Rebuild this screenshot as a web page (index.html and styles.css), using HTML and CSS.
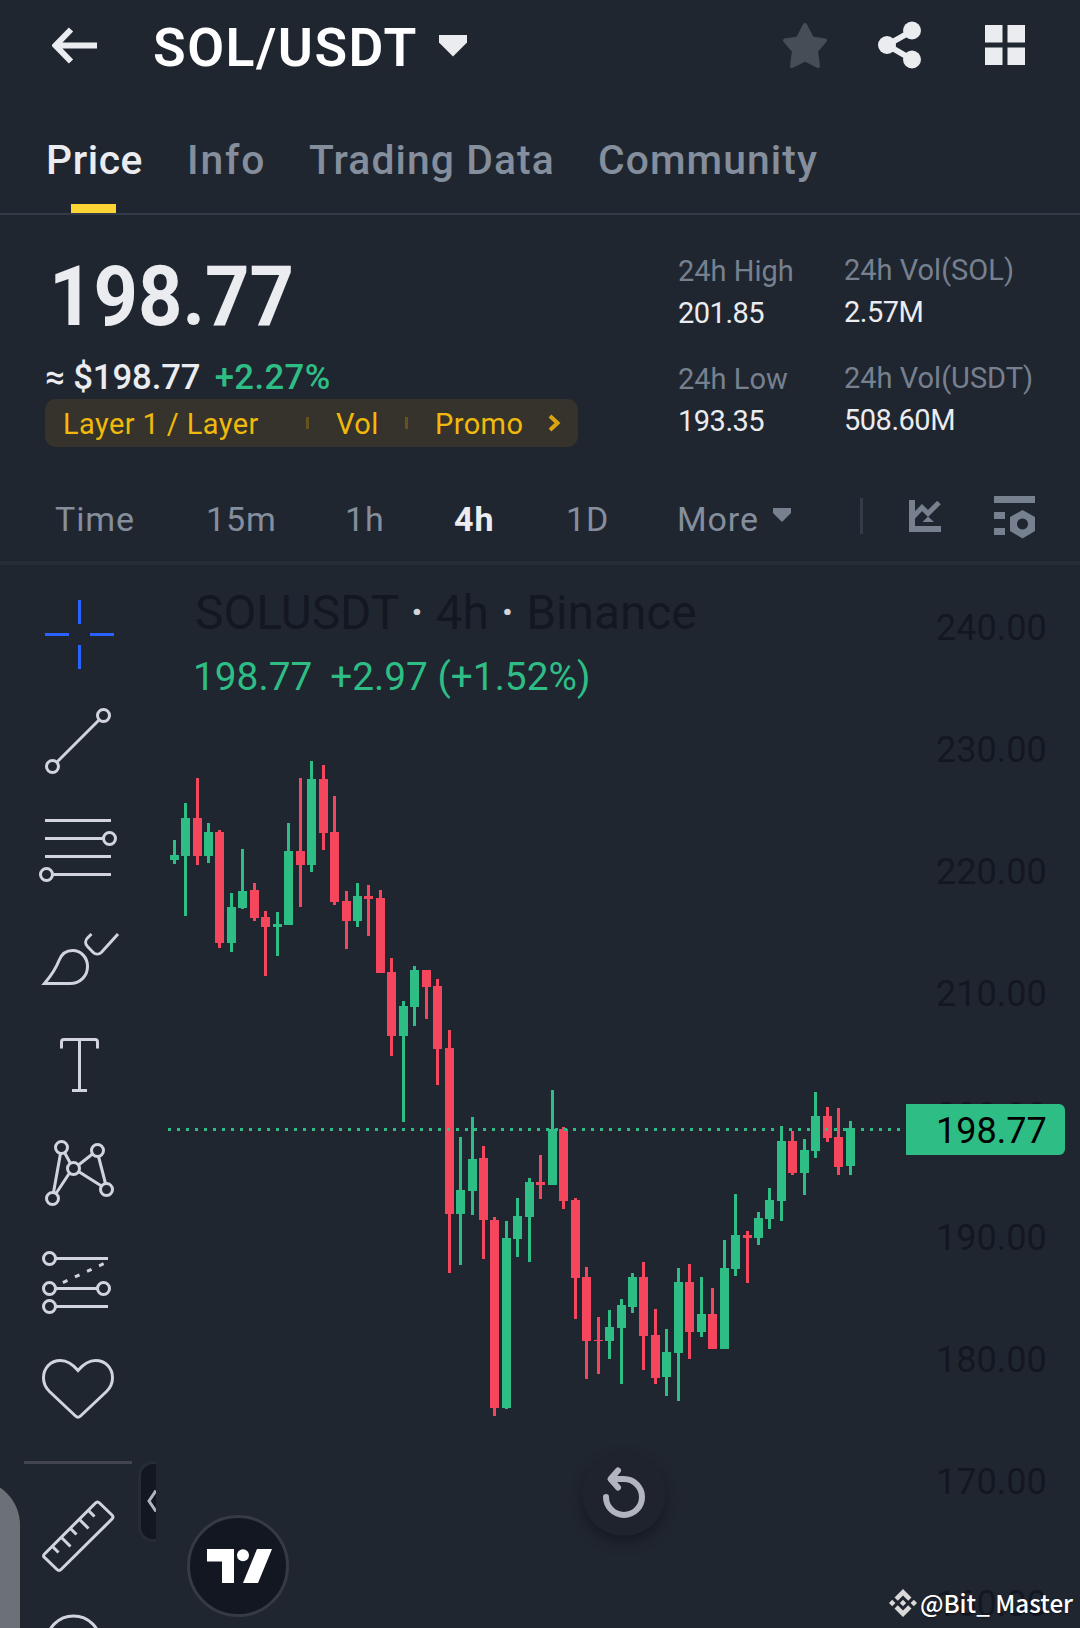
FILE: index.html
```html
<!DOCTYPE html>
<html lang="en">
  <head>
    <meta charset="UTF-8" />
    <meta name="viewport" content="width=device-width, initial-scale=1.0" />
    <title>SOL/USDT</title>
    <link rel="stylesheet" href="styles.css">
  </head>
  <body>
    <header class="header">
      <svg class="back" width="46" height="38" viewBox="0 0 46 38">
        <path d="M19 2.500 L3.500 18.500 L19 34.500 M4 18.500 H45" />
      </svg>
      <h1 class="pair">SOL/USDT</h1>
      <svg class="pair-caret" width="28" height="22" viewBox="0 0 28 22">
        <path d="M0 0H28V7.500L14 21.500L0 7.500Z" />
      </svg>
      <div class="header-actions">
        <svg class="star" width="46" height="48" viewBox="0 0 46 48">
          <path d="M23 3 L30 16.500 L43 18.500 L34 29 L36 44 L23 37.500 L10 44 L12 29 L3 18.500 L16 16.500Z" />
        </svg>
        <svg class="share" width="44" height="48" viewBox="0 0 44 48">
          <path d="M9 24 L34 10 M9 24 L34 38.500" />
          <circle cx="9" cy="24" r="9" />
          <circle cx="34" cy="9.500" r="9" />
          <circle cx="34" cy="38.500" r="9" />
        </svg>
        <svg class="apps" width="40" height="40" viewBox="0 0 40 40">
          <path d="M0 0H17.500V17.500H0Z M22.500 0H40V17.500H22.500Z M0 22.500H17.500V40H0Z M22.500 22.500H40V40H22.500Z" />
        </svg>
      </div>
    </header>

    <nav class="tabs">
      <div class="tab active">Price</div>
      <div class="tab tab-info">Info</div>
      <div class="tab">Trading Data</div>
      <div class="tab">Community</div>
    </nav>

    <section class="quote">
      <div class="quote-main">
        <div class="price">198.77</div>
        <div class="price-sub"><span class="fiat">≈ $198.77</span> <span class="change">+2.27%</span></div>
        <div class="tags">
          <span class="tag-layer">Layer 1 / Layer</span>
          <i class="tag-sep"></i>
          <span class="tag-vol">Vol</span>
          <i class="tag-sep"></i>
          <span class="tag-promo">Promo</span>
          <svg class="tag-arrow" width="13" height="18" viewBox="0 0 13 18">
            <path d="M2 2 L9.500 9 L2 16" />
          </svg>
        </div>
      </div>
      <div class="stats">
        <div class="stat">
          <div class="stat-label">24h High</div>
          <div class="stat-value">201.85</div>
        </div>
        <div class="stat">
          <div class="stat-label">24h Vol(SOL)</div>
          <div class="stat-value">2.57M</div>
        </div>
        <div class="stat">
          <div class="stat-label">24h Low</div>
          <div class="stat-value">193.35</div>
        </div>
        <div class="stat">
          <div class="stat-label">24h Vol(USDT)</div>
          <div class="stat-value">508.60M</div>
        </div>
      </div>
    </section>

    <div class="intervals">
      <span>Time</span>
      <span>15m</span>
      <span>1h</span>
      <span class="active">4h</span>
      <span>1D</span>
      <span>More</span>
      <svg class="more-caret" width="18" height="14" viewBox="0 0 18 14">
        <path d="M0 0H18V5L9 14L0 5Z" />
      </svg>
      <i class="intervals-sep"></i>
      <svg class="chart-icon" width="32" height="32" viewBox="0 0 32 32">
        <path class="fill" d="M0 0H6V26H32V32H0Z M13.500 22 L19 16.500 L25 22Z" />
        <path class="line" d="M4 17 L13 7.500 L19 13.500 L30 2.500" />
      </svg>
      <svg class="settings-icon" width="41" height="43" viewBox="0 0 41 43">
        <path fill-rule="evenodd" d="M0 0H41V7H0Z M0 16H11V23H0Z M0 32H11V39H0Z M28.500 14 L41 21 V35 L28.500 42.500 L16 35 V21Z M28.500 22.500a5.500 5.500 0 1 0 .01 0Z" />
      </svg>
    </div>

    <main class="chart">
      <aside class="toolbar">
        <svg class="tool selected" viewBox="0 0 84 84">
          <path d="M43.500 8V32 M43.500 53V77 M9 42.500H33 M54 42.500H78" />
        </svg>
        <svg class="tool" viewBox="0 0 84 84">
          <path d="M20.500 62.500 L63.500 19.500" />
          <circle cx="67.500" cy="15.500" r="6" />
          <circle cx="16.500" cy="66.500" r="6" />
        </svg>
        <svg class="tool" viewBox="0 0 84 84">
          <path d="M9 12.500H75 M9 30.500H67 M9 48.500H75 M17 66.500H75" />
          <circle cx="73.500" cy="30.500" r="6" />
          <circle cx="10.500" cy="66.500" r="6" />
        </svg>
        <svg class="tool" viewBox="0 0 84 84">
          <path d="M8.500 67.500H34C44 67.500 51.500 60 51.500 50.500C51.500 41.500 45 34.500 36.500 34.500C30 34.500 25.500 38 23 44.500C20 52.500 16 58.500 8.500 67.500Z" />
          <path d="M55.500 18L51.500 22C49 24.500 49 28 51.500 30.500L57 36.200C59.500 38.700 63 38.700 65.500 36.200L82 18" />
        </svg>
        <svg class="tool" viewBox="0 0 84 84">
          <path d="M25.500 24.500V18Q25.500 15.500 28 15.500H59Q61.500 15.500 61.500 18V24.500 M43.500 15.500V66.500 M36 66.500H51" />
        </svg>
        <svg class="tool" viewBox="0 0 84 84">
          <path d="M24.500 21.500L17.500 60.500 M20 61.500L33.500 41 M28.500 20.500L34.500 31.500 M42.500 33L56.500 22 M62.500 24.500L69.500 51.500 M42.500 39.500L65.500 54" />
          <circle cx="25.500" cy="15.500" r="6" />
          <circle cx="61.500" cy="18.500" r="6" />
          <circle cx="37.500" cy="36.500" r="6" />
          <circle cx="70.500" cy="57.500" r="6" />
          <circle cx="16.500" cy="66.500" r="6" />
        </svg>
        <svg class="tool" viewBox="0 0 84 84">
          <path d="M19.500 18.500H72 M19.500 48.500H61.500 M19.500 66.500H72" />
          <path class="dashes" d="M26 43L68 23.500" />
          <circle cx="13.500" cy="18.500" r="6" />
          <circle cx="13.500" cy="48.500" r="6" />
          <circle cx="67.500" cy="48.500" r="6" />
          <circle cx="13.500" cy="66.500" r="6" />
        </svg>
        <svg class="tool" viewBox="0 0 84 84">
          <path d="M42 22.500C36.500 16 31 12.500 24.500 12.500C14.500 12.500 7.500 20 7.500 30C7.500 36 9.500 39.500 13.500 43.500L39.500 68Q42 70.500 44.500 68L70.500 43.500C74.500 39.500 76.500 36 76.500 30C76.500 20 69.500 12.500 59.500 12.500C53 12.500 47.500 16 42 22.500Z" />
        </svg>
        <i class="toolbar-sep"></i>
        <svg class="tool" viewBox="0 0 84 84">
          <path d="M8.500 60L59.500 9Q61.500 7 63.500 9L76 21Q78 23 76 25L25 75.500Q23 77.500 21 75.500L8.500 63.500Q6.500 62 8.500 60Z" />
          <path d="M16.500 52.500L22.500 58.500 M25.500 43.500L34.500 52.500 M34.500 34.500L40.500 40.500 M43.500 25.500L52.500 34.500 M52.500 16.500L58.500 22.500" />
        </svg>
        <svg class="tool" viewBox="0 0 84 84">
          <circle cx="37.500" cy="41" r="27" />
        </svg>
      </aside>

      <div class="plot">
        <div class="legend">
          <div class="legend-title">SOLUSDT <b>·</b> 4h <b>·</b> Binance</div>
          <div class="legend-values"><span>198.77</span><span>+2.97 (+1.52%)</span></div>
        </div>
        <svg class="candles" id="candles" width="750" height="1063" viewBox="156 565 750 1063" shape-rendering="crispEdges"></svg>
        <div class="collapse">
          <svg width="10" height="24" viewBox="0 0 10 24"><path d="M9 1.500L2 12L9 22.500" /></svg>
        </div>
        <div class="tv-logo">
          <svg width="65" height="34" viewBox="0 0 65 34">
            <path d="M0 0H27V34H15V12.500H0Z M50 0H65L51 34H36Z" />
            <circle cx="36" cy="6.300" r="6" />
          </svg>
        </div>
        <div class="reset">
          <svg width="48" height="60" viewBox="0 0 48 60">
            <path d="M6 33A18 18 0 1 0 24 15H12 M18 6.500L10.500 15L18 23.500" />
          </svg>
        </div>
      </div>

      <div class="axis">
        <span>240.00</span>
        <span>230.00</span>
        <span>220.00</span>
        <span>210.00</span>
        <span>200.00</span>
        <span>190.00</span>
        <span>180.00</span>
        <span>170.00</span>
        <span>160.00</span>
        <div class="last-price">198.77</div>
      </div>
    </main>

    <div class="side-handle"></div>

    <div class="author">
      <svg width="28" height="28" viewBox="0 0 28 28">
        <path d="M14 0L22.500 8.500L19.200 11.800L14 6.600L8.800 11.800L5.500 8.500Z M14 28L22.500 19.500L19.200 16.200L14 21.400L8.800 16.200L5.500 19.500Z M14 10.800L17.200 14L14 17.200L10.800 14Z M3.200 10.800L6.400 14L3.200 17.200L0 14Z M24.800 10.800L28 14L24.800 17.200L21.600 14Z" />
      </svg>
      <span>@Bit_ Master</span>
    </div>

    <script>
      // x, high, body top, body bottom, low, direction (1 = up)
      const candles = [
        [170, 840, 855, 860, 864, 1],
        [181, 803, 818, 856, 916, 1],
        [193, 778, 818, 856, 865, 0],
        [204, 823, 832, 856, 863, 1],
        [215, 830, 832, 943, 948, 0],
        [227, 893, 907, 943, 952, 1],
        [238, 849, 891, 908, 909, 1],
        [250, 883, 890, 918, 921, 0],
        [261, 911, 917, 927, 976, 0],
        [273, 912, 924, 927, 956, 1],
        [284, 823, 851, 925, 925, 1],
        [296, 778, 851, 865, 907, 0],
        [307, 761, 779, 865, 872, 1],
        [319, 765, 779, 833, 850, 0],
        [330, 796, 832, 902, 905, 0],
        [342, 891, 901, 921, 949, 0],
        [353, 883, 896, 921, 927, 1],
        [364, 885, 896, 899, 936, 0],
        [376, 890, 898, 973, 973, 0],
        [387, 958, 972, 1036, 1056, 0],
        [399, 1001, 1006, 1036, 1122, 1],
        [410, 966, 970, 1007, 1026, 1],
        [422, 970, 970, 987, 1019, 0],
        [433, 979, 986, 1049, 1085, 0],
        [445, 1030, 1048, 1214, 1273, 0],
        [456, 1137, 1190, 1214, 1265, 1],
        [468, 1117, 1159, 1191, 1215, 1],
        [479, 1146, 1158, 1220, 1259, 0],
        [490, 1217, 1220, 1408, 1416, 0],
        [502, 1221, 1238, 1408, 1409, 1],
        [513, 1198, 1216, 1239, 1257, 1],
        [525, 1178, 1182, 1217, 1262, 1],
        [536, 1155, 1182, 1185, 1199, 0],
        [548, 1090, 1129, 1185, 1185, 1],
        [559, 1127, 1129, 1201, 1209, 0],
        [571, 1198, 1200, 1278, 1319, 0],
        [582, 1267, 1277, 1341, 1379, 0],
        [594, 1317, 1340, 1341, 1374, 0],
        [605, 1310, 1327, 1341, 1359, 1],
        [617, 1299, 1305, 1328, 1384, 1],
        [628, 1273, 1277, 1307, 1313, 1],
        [639, 1262, 1277, 1336, 1370, 0],
        [651, 1309, 1335, 1378, 1384, 0],
        [662, 1329, 1352, 1377, 1396, 1],
        [674, 1268, 1282, 1353, 1401, 1],
        [685, 1264, 1282, 1332, 1359, 0],
        [697, 1277, 1314, 1332, 1337, 1],
        [708, 1288, 1314, 1349, 1349, 0],
        [720, 1240, 1268, 1349, 1349, 1],
        [731, 1194, 1235, 1269, 1276, 1],
        [743, 1231, 1235, 1238, 1283, 0],
        [754, 1212, 1218, 1238, 1245, 1],
        [765, 1188, 1200, 1219, 1229, 1],
        [777, 1126, 1141, 1201, 1221, 1],
        [788, 1131, 1141, 1173, 1175, 0],
        [800, 1139, 1150, 1173, 1195, 1],
        [811, 1092, 1116, 1151, 1158, 1],
        [823, 1107, 1116, 1138, 1142, 0],
        [834, 1108, 1137, 1167, 1175, 0],
        [846, 1121, 1128, 1166, 1175, 1]
      ];

      const svg = document.getElementById("candles");
      let shapes = "";
      candles.forEach(([x, high, top, bottom, low, up]) => {
        const cls = up ? "up" : "down";
        shapes += `<rect class="${cls}" x="${x + 3}" y="${high}" width="3" height="${low - high}" />`;
        shapes += `<rect class="${cls}" x="${x}" y="${top}" width="9" height="${bottom - top}" />`;
      });

      // dotted line at the last price
      shapes += `<line class="last-line" x1="168" y1="1129.5" x2="900" y2="1129.5" />`;
      svg.innerHTML = shapes;
    </script>
  </body>
</html>
```
FILE: styles.css
```css
* {
  box-sizing: border-box;
}

body {
  margin: 0;
  width: 1080px;
  height: 1628px;
  position: relative;
  overflow: hidden;
  background-color: #202630;
  color: #eaecef;
  font-family: Roboto, "Liberation Sans", sans-serif;
}

svg {
  display: block;
  flex-shrink: 0;
}

/* Header */
.header {
  display: flex;
  align-items: center;
  height: 96px;
  padding: 0 55px 0 52px;
}

.back {
  margin-top: -5px;
  fill: none;
  stroke: #eaecef;
  stroke-width: 6;
}

.pair {
  width: 266px;
  margin: 0 0 0 55px;
  font-size: 53.5px;
  font-weight: 600;
  line-height: 60px;
  letter-spacing: 1.5px;
  white-space: nowrap;
  color: #fff;
}

.pair-caret {
  margin: -4px 0 0 20px;
  fill: #eaecef;
}

.header-actions {
  display: flex;
  align-items: center;
  margin-left: auto;
  margin-top: -6px;
  fill: #eaecef;
}

.star {
  margin-top: 2px;
  fill: #474d57;
  stroke: #474d57;
  stroke-width: 4;
  stroke-linejoin: round;
  margin-right: 50px;
}

.share {
  margin-right: 63px;
}

.share path {
  stroke: #eaecef;
  stroke-width: 6;
}

/* Tabs */
.tabs {
  display: grid;
  grid-template-columns: 141px 122px 289px auto;
  grid-template-rows: 117px;
  height: 119px;
  padding-left: 46px;
  border-bottom: 2px solid #333b47;
  font-size: 40.8px;
  font-weight: 500;
  letter-spacing: 1.1px;
  line-height: 128px;
  color: #848e9c;
}

.tab {
  position: relative;
  white-space: nowrap;
}

.tab.active {
  color: #eaecef;
  letter-spacing: 0.6px;
}

.tab-info {
  letter-spacing: 1.9px;
}

.tab.active::after {
  content: "";
  position: absolute;
  left: 25px;
  bottom: 0;
  width: 45px;
  height: 9px;
  background-color: #fcd535;
}

/* Quote */
.quote {
  display: flex;
  height: 260px;
  padding: 35px 0 0 45px;
}

.quote-main {
  width: 633px;
}

.price {
  margin: 7px 0 20px 4px;
  font-size: 83px;
  font-weight: 700;
  line-height: 80px;
  transform: scaleX(0.935);
  transform-origin: left;
}

.price-sub {
  height: 42px;
  font-size: 34.7px;
  font-weight: 500;
  line-height: 40px;
  white-space: nowrap;
}

.fiat {
  display: inline-block;
  width: 161px;
  letter-spacing: -0.1px;
}

.change {
  color: #2ebd85;
  letter-spacing: 0.4px;
}

.tags {
  display: flex;
  align-items: center;
  width: 533px;
  height: 48px;
  padding-left: 18px;
  border-radius: 11px;
  background-color: #35332c;
  color: #f0b90b;
  font-size: 29px;
  letter-spacing: 0.4px;
  white-space: nowrap;
}

.tags span {
  padding-top: 2px;
}

.tag-layer {
  width: 243px;
}

.tag-sep {
  width: 3px;
  height: 12px;
  background-color: #66521f;
}

.tag-vol {
  width: 69px;
  margin-left: 27px;
}

.tag-promo {
  width: 86px;
  margin-left: 27px;
}

.tag-arrow {
  margin-left: 27px;
  fill: none;
  stroke: #d9a50f;
  stroke-width: 4;
}

.stats {
  display: grid;
  grid-template-columns: 166px auto;
  grid-template-rows: 84px 84px;
  row-gap: 24px;
  font-size: 29px;
  line-height: 42px;
  white-space: nowrap;
}

.stat:nth-child(even) {
  margin-top: -1px;
}

.stat-label {
  color: #76808f;
}

.stat-value {
  letter-spacing: -0.5px;
}

/* Intervals */
.intervals {
  display: grid;
  grid-template-columns: 151px 139px 109px 112px 111px 96px 87px 49px 85px 41px;
  align-items: center;
  height: 90px;
  padding: 0 0 5px 55px;
  border-bottom: 4px solid #272d37;
  font-size: 34px;
  letter-spacing: 0.9px;
  line-height: 74px;
  color: #848e9c;
}

.intervals span {
  padding-top: 7px;
}

.intervals .active {
  color: #eaecef;
  font-weight: 700;
}

.intervals svg {
  fill: #76808f;
}

.intervals .more-caret {
  margin-top: -1px;
}

.intervals .settings-icon {
  margin-top: 3px;
}

.intervals-sep {
  width: 3px;
  height: 36px;
  background-color: #333b47;
}

.chart-icon .line {
  fill: none;
  stroke: #76808f;
  stroke-width: 5;
}

/* Chart */
.chart {
  display: grid;
  grid-template-columns: 156px 750px 174px;
  height: 1063px;
}

.toolbar {
  display: flex;
  flex-direction: column;
  gap: 24px;
  height: 1063px;
  padding: 27px 0 0 36px;
  overflow: hidden;
}

.tool {
  width: 84px;
  height: 84px;
  fill: none;
  stroke: #d1d4dc;
  stroke-width: 3;
}

.tool.selected {
  stroke: #2962ff;
}

.tool .dashes {
  stroke-dasharray: 5 8.3;
  stroke-dashoffset: -1;
}

.toolbar-sep {
  flex-shrink: 0;
  width: 108px;
  height: 3px;
  margin: 5px 0 6px -12px;
  background-color: #434651;
}

.plot {
  position: relative;
}

.legend {
  position: absolute;
  left: 39px;
  top: 18px;
  white-space: nowrap;
}

.legend-title {
  font-size: 47.8px;
  line-height: 60px;
  color: #131722;
}

.legend-title b {
  font-weight: 500;
  color: #d1d4dc;
}

.legend-values {
  display: flex;
  gap: 18px;
  margin: 4px 0 0 -2px;
  font-size: 38.8px;
  line-height: 60px;
  color: #2ebd85;
}

.up {
  fill: #2ebd85;
}

.down {
  fill: #f6465d;
}

.last-line {
  stroke: #2ebd85;
  stroke-width: 3;
  stroke-dasharray: 3 6;
}

.collapse {
  position: absolute;
  left: -18px;
  top: 896px;
  width: 18px;
  height: 81px;
  padding: 25px 0 0 6px;
  border: 3px solid #262c35;
  border-right: 0;
  border-radius: 15px 0 0 15px;
  background-color: #131722;
  overflow: hidden;
}

.collapse svg {
  fill: none;
  stroke: #b2b5be;
  stroke-width: 3;
}

.tv-logo {
  position: absolute;
  left: 31px;
  top: 950px;
  display: flex;
  align-items: center;
  justify-content: center;
  width: 102px;
  height: 102px;
  padding-left: 2px;
  border: 3px solid #363a45;
  border-radius: 50%;
  background-color: #131722;
  fill: #fff;
}

.reset {
  position: absolute;
  left: 426px;
  top: 887px;
  display: flex;
  align-items: center;
  justify-content: center;
  width: 84px;
  height: 84px;
  border-radius: 50%;
  background-color: #1e232d;
  box-shadow: 0 6px 12px rgba(19, 23, 34, 0.8);
}

.reset svg {
  fill: none;
  stroke: #b2b5be;
  stroke-width: 6;
  stroke-linecap: round;
  stroke-linejoin: round;
}

.axis {
  position: relative;
  display: flex;
  flex-direction: column;
  height: 1063px;
  padding-left: 30px;
  font-size: 36px;
  color: #131722;
}

.axis span {
  flex: none;
  height: 122px;
  line-height: 126px;
}

/* bottom label has no full row left */
.axis span:nth-child(9) {
  height: 80px;
}

.last-price {
  position: absolute;
  left: 0;
  top: 539px;
  width: 159px;
  height: 51px;
  padding-left: 30px;
  border-radius: 0 6px 6px 0;
  background-color: #2ebd85;
  color: #000;
  line-height: 54px;
}

/* Overlays */
.side-handle {
  position: absolute;
  left: -70px;
  top: 1480px;
  width: 90px;
  height: 200px;
  border-radius: 45px;
  background-color: #6c7077;
}

.author {
  position: absolute;
  right: 7px;
  bottom: 8px;
  display: flex;
  align-items: center;
  gap: 3px;
  height: 34px;
  font-family: "Noto Sans CJK SC", "Noto Sans", sans-serif;
  font-size: 24.2px;
  font-weight: 500;
  line-height: 34px;
  white-space: nowrap;
  color: #fff;
  text-shadow: 0 1px 2px rgba(0, 0, 0, 0.5);
}

.author svg {
  fill: #d9d9d9;
}
```
